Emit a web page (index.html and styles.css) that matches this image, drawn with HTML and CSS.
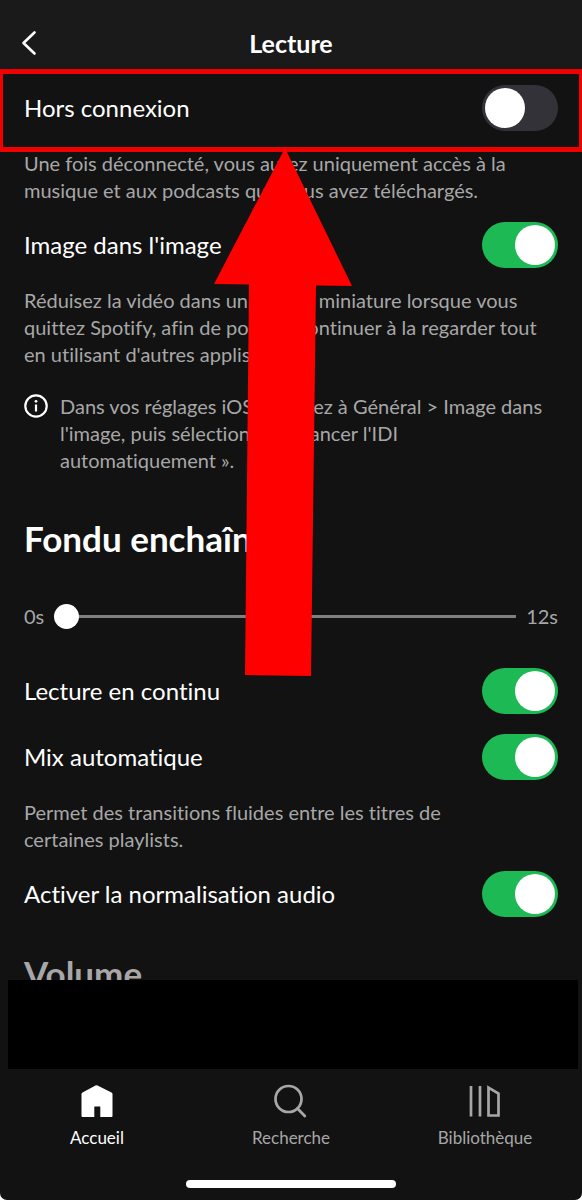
FILE: index.html
```html
<!DOCTYPE html>
<html lang="fr">
<head>
<meta charset="utf-8">
<meta name="viewport" content="width=device-width, initial-scale=1">
<title>Lecture</title>
<link rel="stylesheet" href="styles.css">
</head>
<body>
<div class="screen">
  <header class="topbar">
    <button class="back" type="button" aria-label="Retour">
      <svg width="16" height="26" viewBox="0 0 16 26"><path d="M13.500 2.500 2.500 13 13.500 23.500" fill="none" stroke="#fff" stroke-width="2.600" stroke-linecap="round" stroke-linejoin="round"/></svg>
    </button>
    <h1 class="title">Lecture</h1>
  </header>

  <main class="settings">
    <div class="row row-first">
      <label for="offline">Hors connexion</label>
      <input class="toggle" type="checkbox" id="offline">
    </div>
    <p class="desc desc-tight">Une fois déconnecté, vous aurez uniquement accès à la<br>musique et aux podcasts que vous avez téléchargés.</p>

    <div class="row">
      <label for="pip">Image dans l'image</label>
      <input class="toggle" type="checkbox" id="pip" checked>
    </div>
    <p class="desc">Réduisez la vidéo dans un lecteur miniature lorsque vous<br>quittez Spotify, afin de pouvoir continuer à la regarder tout<br>en utilisant d'autres applis.</p>
    <div class="note">
      <svg class="note-icon" width="24" height="27" viewBox="0 0 24 27"><circle cx="12" cy="13" r="10.700" fill="none" stroke="#fff" stroke-width="2.200"/><circle cx="12" cy="8.300" r="1.400" fill="#fff"/><path d="M12 11.500V18.500" stroke="#fff" stroke-width="2.200"/></svg>
      <p class="desc-text">Dans vos réglages iOS, accédez à Général &gt; Image dans<br>l'image, puis sélectionnez « Lancer l'IDI<br>automatiquement ».</p>
    </div>

    <h2 class="heading">Fondu enchaîné</h2>
    <div class="fade">
      <span>0s</span>
      <input class="slider" type="range" min="0" max="12" value="0" aria-label="Fondu enchaîné">
      <span>12s</span>
    </div>

    <div class="row">
      <label for="gapless">Lecture en continu</label>
      <input class="toggle" type="checkbox" id="gapless" checked>
    </div>
    <div class="row">
      <label for="automix">Mix automatique</label>
      <input class="toggle" type="checkbox" id="automix" checked>
    </div>
    <p class="desc">Permet des transitions fluides entre les titres de<br>certaines playlists.</p>
    <div class="row">
      <label for="normalize">Activer la normalisation audio</label>
      <input class="toggle" type="checkbox" id="normalize" checked>
    </div>
    <h2 class="heading heading-dim">Volume</h2>

    <svg class="arrow" width="138" height="530" viewBox="0 0 138 530" aria-hidden="true"><path d="M71 0 138 138 102 137.500 97 528 31 527 35 136.500 0 136Z" fill="#f00"/></svg>
  </main>

  <div class="player"></div>

  <nav class="tabs">
    <a class="tab tab-active" href="#accueil">
      <svg width="34" height="34" viewBox="0 0 34 34"><path d="M17 1.200 31.500 8.500Q32.500 9 32.500 10V32Q32.500 33 31.500 33H20.300V22.500H14.300V33H2.500Q1.500 33 1.500 32V10Q1.500 9 2.500 8.500L15.500 1.600Q17 .8 18.500 1.600Z" fill="currentColor"/></svg>
      Accueil
    </a>
    <a class="tab" href="#recherche">
      <svg width="34" height="34" viewBox="0 0 34 34"><circle cx="14.500" cy="15" r="13" fill="none" stroke="currentColor" stroke-width="2.700"/><path d="M23.500 24.500 30.800 32" stroke="currentColor" stroke-width="2.800" stroke-linecap="round"/></svg>
      Recherche
    </a>
    <a class="tab" href="#bibliotheque">
      <svg width="34" height="34" viewBox="0 0 34 34"><path d="M3 2V32.500M12 2V32.500M20.500 3.700 30.500 9.500V31.500H20.500Z" fill="none" stroke="currentColor" stroke-width="2.700"/></svg>
      Bibliothèque
    </a>
  </nav>
  <div class="home-bar"></div>
</div>
</body>
</html>
```
FILE: styles.css
```css
* { box-sizing: border-box; }

body {
  margin: 0;
  background: #fff;
  font-family: Lato, "Noto Sans", sans-serif;
  font-variant-ligatures: none;
  color: #fff;
}

h1, h2, p { margin: 0; }

.screen {
  display: flex;
  flex-direction: column;
  min-height: 100vh;
  overflow: hidden;
  background: #121212;
  border-radius: 0 0 7px 7px;
}

.topbar {
  display: grid;
  grid-template-columns: 48px 1fr 48px;
  align-items: center;
  height: 69px;
  padding-top: 16px;
  background: #1a1a1a;
}

.back {
  display: flex;
  padding: 0 0 0 21px;
  border: 0;
  background: none;
}

.title {
  font-size: 25px;
  line-height: 30px;
  text-align: center;
}

.settings { position: relative; }

.row {
  position: relative;
  display: flex;
  align-items: center;
  justify-content: space-between;
  min-height: 66px;
  padding: 0 24px;
  font-size: 24px;
  line-height: 30px;
}

.row-first { min-height: 78px; }

.row-first::after {
  content: "";
  position: absolute;
  inset: 0 0 -5px;
  border: solid #f00000;
  border-width: 5px 3px;
  pointer-events: none;
}

.desc, .note, .fade {
  font-size: 20px;
  line-height: 27px;
  color: #a7a7a7;
}

.desc { padding: 9px 24px 8px; }
.desc-tight { padding-top: 3px; }

.note {
  display: flex;
  gap: 12px;
  padding: 17px 24px 0;
}

.note-icon { flex: none; }

.heading {
  padding: 42px 24px 0;
  font-size: 35px;
  line-height: 44px;
}

.fade {
  display: flex;
  align-items: center;
  gap: 10px;
  padding: 43px 24px 28px;
}

.slider {
  flex: 1;
  min-width: 0;
  height: 25px;
  margin: 0;
  appearance: none;
  background: linear-gradient(#7f7f7f, #7f7f7f) center / 100% 3px no-repeat;
}

.slider::-webkit-slider-thumb {
  appearance: none;
  width: 25px;
  height: 25px;
  border-radius: 50%;
  background: #fff;
}

.toggle {
  flex: none;
  appearance: none;
  width: 76px;
  height: 46px;
  margin: 0;
  padding: 3px;
  border-radius: 23px;
  background: #333238;
}

.toggle::before {
  content: "";
  display: block;
  width: 40px;
  height: 40px;
  border-radius: 50%;
  background: #fff;
}

.toggle:checked { background: #1db954; }
.toggle:checked::before { margin-left: auto; }

.heading-dim {
  padding-top: 24px;
  color: #a7a7a7;
}

.arrow {
  position: absolute;
  top: 79px;
  left: calc(50% - 77px);
}

.player {
  position: relative;
  height: 89px;
  margin: -15px 4px 0 8px;
  background: #000;
}

.tabs {
  display: grid;
  grid-template-columns: repeat(3, 1fr);
  padding-top: 15px;
}

.tab {
  display: flex;
  flex-direction: column;
  align-items: center;
  gap: 9px;
  font-size: 17px;
  line-height: 22px;
  color: #a7a7a7;
  text-decoration: none;
}

.tab-active { color: #fff; }

.home-bar {
  width: 36%;
  height: 8px;
  margin: auto auto 12px;
  border-radius: 4px;
  background: #fff;
}
```
